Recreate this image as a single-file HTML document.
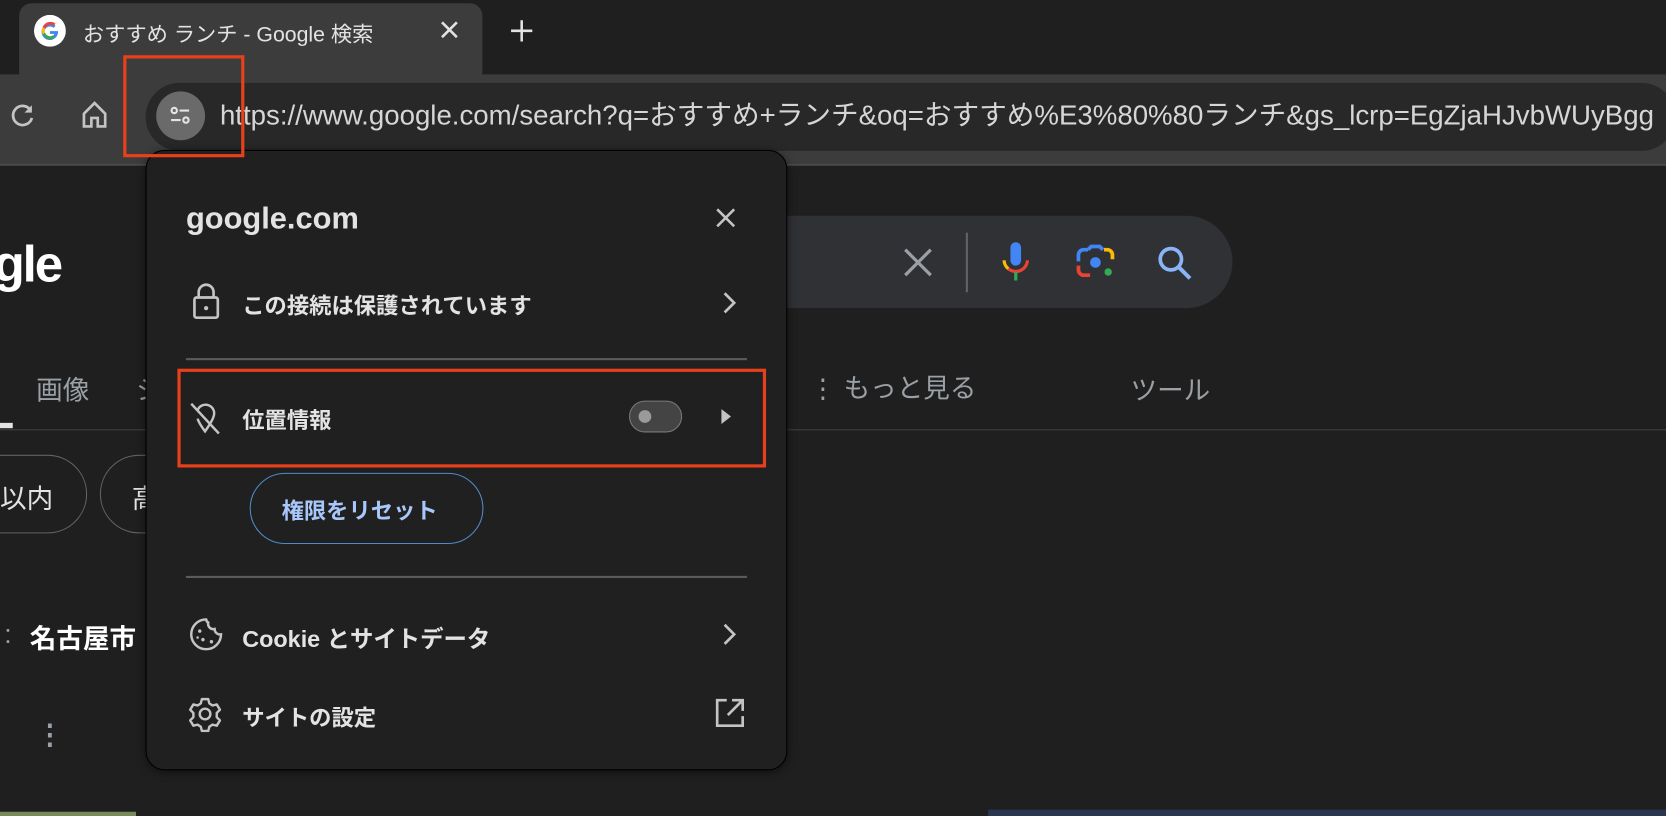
<!DOCTYPE html>
<html><head><meta charset="utf-8"><style>
*{margin:0;padding:0;box-sizing:border-box}
html,body{width:1666px;height:816px;overflow:hidden;background:#1f1f1f}
#s{position:absolute;left:0;top:0;width:1568px;height:768px;transform:scale(1.0625);transform-origin:0 0;font-family:"Liberation Sans","Noto Sans CJK JP",sans-serif;color:#e3e3e3}
.a{position:absolute}
.t{white-space:nowrap}
</style></head><body><div id="s">
<div class="a" style="left:0;top:0;width:1568px;height:70px;background:#1f1f1f"></div>
<div class="a" style="left:18px;top:3px;width:436px;height:70px;background:#3c3c3c;border-radius:12px 12px 0 0"></div>
<svg class="a" style="left:32px;top:14px" width="30" height="30" viewBox="0 0 30 30"><circle cx="15" cy="15" r="15" fill="#fff"/><path d="M22 15.3h-7v2.6h4.1c-.5 2-2.2 3.2-4.1 3.2a5.1 5.1 0 1 1 3.4-8.9l1.9-1.9A7.8 7.8 0 1 0 22.6 15c0 .1-.6.3-.6.3z" fill="#4285f4"/><path d="M8.2 11.4l2.2 1.6a5.1 5.1 0 0 1 8-2.8l1.9-1.9a7.8 7.8 0 0 0-12.1 3.1z" fill="#ea4335"/><path d="M15 22.8a7.7 7.7 0 0 0 5.2-2l-2-1.7a5 5 0 0 1-7.8-2.4l-2.2 1.7a7.8 7.8 0 0 0 6.8 4.4z" fill="#34a853"/><path d="M10.4 16.7a5 5 0 0 1 0-3.7L8.2 11.4a7.8 7.8 0 0 0 0 7z" fill="#fbbc05"/></svg>
<div class="a t" style="left:78px;top:16px;font-size:20px;color:#e3e3e3">おすすめ ランチ - Google 検索</div>
<svg class="a" style="left:414px;top:19px" width="18" height="18" viewBox="0 0 18 18"><path d="M2 2l14 14M16 2L2 16" stroke="#e3e3e3" stroke-width="2.4"/></svg>
<svg class="a" style="left:480px;top:18px" width="22" height="22" viewBox="0 0 22 22"><path d="M11 1v20M1 11h20" stroke="#e3e3e3" stroke-width="2.4"/></svg>
<div class="a" style="left:0;top:70px;width:1568px;height:84px;background:#3c3c3c"></div>
<div class="a" style="left:0;top:154px;width:1568px;height:2px;background:#4a4a4a"></div>
<div class="a" style="left:137px;top:78px;width:1440px;height:64px;background:#282828;border-radius:32px"></div>
<svg class="a" style="left:8px;top:96px" width="26" height="26" viewBox="0 0 26 26"><path d="M21 8A9 9 0 1 0 22 15" stroke="#c4c4c4" stroke-width="2.6" fill="none"/><path d="M22 3v7h-7z" fill="#c4c4c4"/></svg>
<svg class="a" style="left:76px;top:94px" width="26" height="28" viewBox="0 0 26 28"><path d="M3 13L13 3l10 10v12h-7v-8h-6v8H3z" fill="none" stroke="#c4c4c4" stroke-width="2.5"/></svg>
<div class="a" style="left:147px;top:86px;width:46px;height:46px;border-radius:50%;background:#6a6a6a"></div>
<svg class="a" style="left:157px;top:96px" width="26" height="26" viewBox="0 0 26 26"><circle cx="7" cy="8" r="2.5" fill="none" stroke="#e3e3e3" stroke-width="2"/><path d="M12 8h9M4 17h9" stroke="#e3e3e3" stroke-width="2"/><circle cx="18" cy="17" r="2.5" fill="none" stroke="#e3e3e3" stroke-width="2"/></svg>
<div class="a t" style="left:207px;top:93px;font-size:26px;color:#d6d6d6;line-height:30px">https://www.google.com/search?q=おすすめ+ランチ&amp;oq=おすすめ%E3%80%80ランチ&amp;gs_lcrp=EgZjaHJvbWUyBgg</div>
<div class="a t" style="left:-6px;top:222px;font-size:48px;color:#fff;letter-spacing:-2px;font-weight:bold">gle</div>
<div class="a" style="left:600px;top:203px;width:560px;height:87px;background:#303134;border-radius:44px"></div>
<svg class="a" style="left:850px;top:233px" width="28" height="28" viewBox="0 0 28 28"><path d="M2 2l24 24M26 2L2 26" stroke="#9aa0a6" stroke-width="3"/></svg>
<div class="a" style="left:909px;top:219px;width:2px;height:56px;background:#5f6368"></div>
<svg class="a" style="left:938px;top:226px" width="36" height="42" viewBox="0 0 36 42"><rect x="13" y="2" width="10" height="22" rx="5" fill="#4285f4"/><path d="M7 19a11 11 0 0 0 4 8" stroke="#fbbc05" stroke-width="3" fill="none"/><path d="M11 27a11 11 0 0 0 18-8" stroke="#ea4335" stroke-width="3" fill="none"/><path d="M18 30v8" stroke="#34a853" stroke-width="3"/></svg>
<svg class="a" style="left:1010px;top:226px" width="42" height="42" viewBox="0 0 42 42"><path d="M5 20v-6a5 5 0 0 1 5-5h4" stroke="#4285f4" stroke-width="3.5" fill="none"/><path d="M14 9l3-3h8l3 3" stroke="#4285f4" stroke-width="3.5" fill="none"/><path d="M29 9h3a5 5 0 0 1 5 5v4" stroke="#fbbc05" stroke-width="3.5" fill="none"/><path d="M5 24v4a5 5 0 0 0 5 5h6" stroke="#ea4335" stroke-width="3.5" fill="none"/><circle cx="21" cy="21" r="5" fill="#4285f4"/><circle cx="33" cy="30" r="3.5" fill="#34a853"/></svg>
<svg class="a" style="left:1086px;top:228px" width="40" height="40" viewBox="0 0 40 40"><circle cx="16" cy="16" r="10" stroke="#8ab4f8" stroke-width="3.5" fill="none"/><path d="M23 23l11 11" stroke="#8ab4f8" stroke-width="3.8"/></svg>
<div class="a t" style="left:34px;top:348px;font-size:25px;color:#9aa0a6">画像</div>
<div class="a t" style="left:128px;top:348px;font-size:25px;color:#9aa0a6">シ</div>
<div class="a t" style="left:762px;top:346px;font-size:25px;color:#9aa0a6">⋮ もっと見る</div>
<div class="a t" style="left:1064px;top:348px;font-size:25px;color:#9aa0a6">ツール</div>
<div class="a" style="left:0;top:398px;width:12px;height:5px;background:#e3e3e3"></div>
<div class="a" style="left:0;top:404px;width:1568px;height:1px;background:#3c4043"></div>
<div class="a" style="left:-40px;top:428px;width:122px;height:74px;border:1.5px solid #5f6368;border-radius:37px"></div>
<div class="a t" style="left:0;top:450px;font-size:25px;color:#e3e3e3">以内</div>
<div class="a" style="left:94px;top:428px;width:122px;height:74px;border:1.5px solid #5f6368;border-radius:37px"></div>
<div class="a t" style="left:124px;top:450px;font-size:25px;color:#e3e3e3">高</div>
<div class="a t" style="left:4px;top:583px;font-size:25px;color:#9aa0a6">:</div>
<div class="a t" style="left:28px;top:582px;font-size:25px;color:#fff;font-weight:bold">名古屋市</div>
<div class="a t" style="left:34px;top:676px;font-size:26px;color:#9aa0a6;font-weight:bold">⋮</div>
<div class="a" style="left:0;top:764px;width:128px;height:4px;background:#7a8a5a"></div>
<div class="a" style="left:930px;top:762px;width:638px;height:6px;background:#2a3550"></div>
<div class="a" style="left:137px;top:141px;width:604px;height:584px;background:#202020;border:1px solid #000;border-radius:18px;box-shadow:0 2px 8px rgba(0,0,0,.5)"></div>
<div class="a t" style="left:175px;top:190px;font-size:29px;color:#e3e3e3;font-weight:bold">google.com</div>
<svg class="a" style="left:673px;top:195px" width="20" height="20" viewBox="0 0 20 20"><path d="M2 2l16 16M18 2L2 18" stroke="#c4c4c4" stroke-width="2.4"/></svg>
<svg class="a" style="left:180px;top:266px" width="28" height="36" viewBox="0 0 28 36"><path d="M7 14V9a7 7 0 0 1 14 0v5" stroke="#c4c4c4" stroke-width="2.5" fill="none"/><rect x="3" y="14" width="22" height="19" rx="2" stroke="#c4c4c4" stroke-width="2.5" fill="none"/><circle cx="14" cy="24" r="2" fill="#c4c4c4"/></svg>
<div class="a t" style="left:228px;top:272px;font-size:21px;color:#e3e3e3;font-weight:bold">この接続は保護されています</div>
<svg class="a" style="left:678px;top:273px" width="16" height="24" viewBox="0 0 16 24"><path d="M4 3l9 9-9 9" stroke="#c4c4c4" stroke-width="2.5" fill="none"/></svg>
<div class="a" style="left:175px;top:337px;width:528px;height:2px;background:#5a5a5a"></div>
<svg class="a" style="left:177px;top:377px" width="32" height="34" viewBox="0 0 32 34"><path d="M9 9a8 8 0 0 1 15 6c-1 4-4 8-8 14-3-4-6-8-7-12" stroke="#c4c4c4" stroke-width="2.3" fill="none"/><path d="M3 3l26 28" stroke="#c4c4c4" stroke-width="2.3"/></svg>
<div class="a t" style="left:228px;top:380px;font-size:21px;color:#e3e3e3;font-weight:bold">位置情報</div>
<div class="a" style="left:592px;top:377px;width:50px;height:30px;border-radius:15px;background:#444;border:1.5px solid #7a7a7a"></div>
<div class="a" style="left:601px;top:386px;width:12px;height:12px;border-radius:50%;background:#9a9a9a"></div>
<svg class="a" style="left:676px;top:383px" width="14" height="18" viewBox="0 0 14 18"><path d="M3 2l9 7-9 7z" fill="#c4c4c4"/></svg>
<div class="a" style="left:167px;top:347px;width:554px;height:93px;border:3px solid #e8401c"></div>
<div class="a" style="left:235px;top:445px;width:220px;height:67px;border:1.5px solid #4f8ac9;border-radius:34px"></div>
<div class="a t" style="left:265px;top:465px;font-size:21px;color:#a8c7fa;font-weight:bold">権限をリセット</div>
<div class="a" style="left:175px;top:542px;width:528px;height:2px;background:#5a5a5a"></div>
<svg class="a" style="left:177px;top:580px" width="34" height="34" viewBox="0 0 34 34"><path d="M17 3a14 14 0 1 0 14 14 5 5 0 0 1-6-5 5 5 0 0 1-6-6 4 4 0 0 1-2-3z" stroke="#c4c4c4" stroke-width="2.3" fill="none"/><circle cx="11" cy="14" r="1.6" fill="#c4c4c4"/><circle cx="14" cy="22" r="1.6" fill="#c4c4c4"/><circle cx="22" cy="24" r="1.6" fill="#c4c4c4"/><circle cx="9" cy="20" r="1.2" fill="#c4c4c4"/></svg>
<div class="a t" style="left:228px;top:584px;font-size:22px;color:#e3e3e3;font-weight:bold">Cookie とサイトデータ</div>
<svg class="a" style="left:678px;top:585px" width="16" height="24" viewBox="0 0 16 24"><path d="M4 3l9 9-9 9" stroke="#c4c4c4" stroke-width="2.5" fill="none"/></svg>
<svg class="a" style="left:176px;top:655px" width="34" height="34" viewBox="0 0 34 34"><path d="M14 3h6l1 4 3 2 4-1 3 5-3 3v4l3 3-3 5-4-1-3 2-1 4h-6l-1-4-3-2-4 1-3-5 3-3v-4L3 13l3-5 4 1 3-2z" stroke="#c4c4c4" stroke-width="2.3" fill="none" stroke-linejoin="round"/><circle cx="17" cy="17" r="5" stroke="#c4c4c4" stroke-width="2.3" fill="none"/></svg>
<div class="a t" style="left:228px;top:660px;font-size:21px;color:#e3e3e3;font-weight:bold">サイトの設定</div>
<svg class="a" style="left:672px;top:656px" width="30" height="30" viewBox="0 0 30 30"><path d="M12 3H3v24h24v-9" stroke="#c4c4c4" stroke-width="2.5" fill="none"/><path d="M17 3h10v10M27 3L13 17" stroke="#c4c4c4" stroke-width="2.5" fill="none"/></svg>
<div class="a" style="left:116px;top:52px;width:114px;height:96px;border:3px solid #e8401c"></div>
</div></body></html>
